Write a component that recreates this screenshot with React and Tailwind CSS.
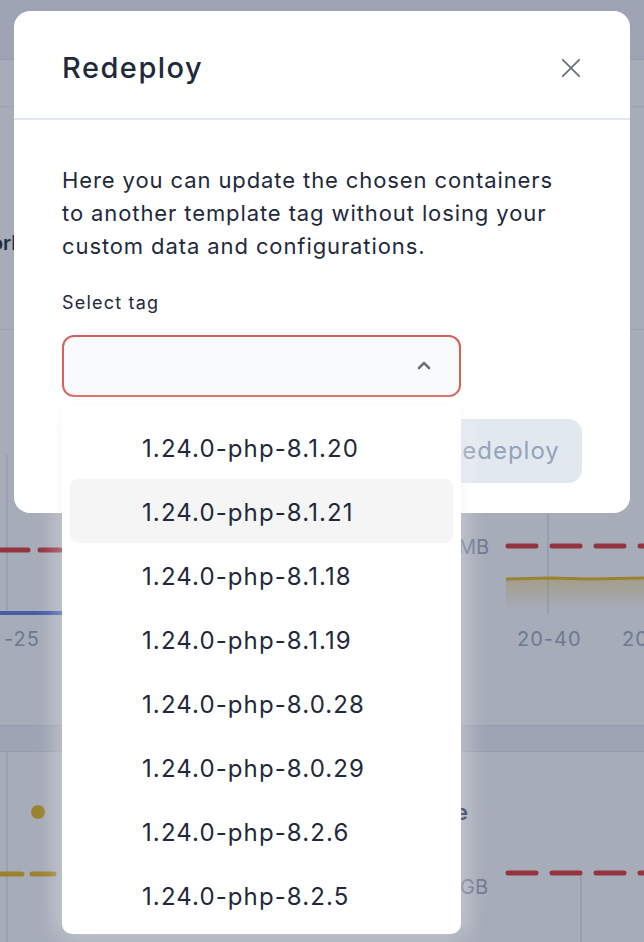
import React from 'react';

const tags = [
  '1.24.0-php-8.1.20',
  '1.24.0-php-8.1.21',
  '1.24.0-php-8.1.18',
  '1.24.0-php-8.1.19',
  '1.24.0-php-8.0.28',
  '1.24.0-php-8.0.29',
  '1.24.0-php-8.2.6',
  '1.24.0-php-8.2.5',
];

const font = { fontFamily: 'Inter, "Noto Sans", sans-serif' };

// dashboard that sits behind the overlay
function Dashboard() {
  return (
    <div className="w-full h-[942px] bg-white flex flex-col text-[#0f172a]">
      <div className="h-[60px] bg-[#eef1f5] border-b border-[#dfe3ea]" />
      <div className="h-[47px] border-b border-[#e5e7eb]" />
      <div className="h-[223px] border-b border-[#e5e7eb] flex items-center">
        <span className="-ml-[60px] mt-[50px] text-[20px] font-semibold">Network</span>
      </div>
      <div className="h-[395px] flex">
        <svg width="440" height="395" className="shrink-0">
          <line x1="7" y1="125" x2="7" y2="280" stroke="#e2e8f0" strokeWidth="2" />
          <line x1="0" y1="220" x2="60" y2="220" stroke="#dc2626" strokeWidth="5" strokeDasharray="28 12" strokeLinecap="round" />
          <line x1="0" y1="283" x2="70" y2="283" stroke="#4f6fe0" strokeWidth="4" />
          <text x="4" y="316" fontSize="20" fill="#94a3b8" style={font} letterSpacing="1">-25</text>
        </svg>
        <svg width="204" height="395" className="shrink-0">
          <defs>
            <linearGradient id="ylw" x1="0" y1="0" x2="0" y2="1">
              <stop offset="0" stopColor="#eab308" stopOpacity="0.35" />
              <stop offset="1" stopColor="#eab308" stopOpacity="0" />
            </linearGradient>
          </defs>
          <line x1="108" y1="180" x2="108" y2="285" stroke="#e2e8f0" strokeWidth="2" />
          <text x="18" y="224" fontSize="20" fill="#94a3b8" style={font}>MB</text>
          <line x1="68" y1="216" x2="204" y2="216" stroke="#dc2626" strokeWidth="5" strokeDasharray="28 16" strokeLinecap="round" />
          <path d="M66 249 L110 248 L150 249 L204 248 L204 280 L66 280 Z" fill="url(#ylw)" />
          <path d="M66 249 L110 248 L150 249 L204 248" stroke="#eab308" strokeWidth="3" fill="none" />
          <text x="77" y="316" fontSize="20" fill="#94a3b8" style={font} letterSpacing="1">20-40</text>
          <text x="182" y="316" fontSize="20" fill="#94a3b8" style={font} letterSpacing="1">20</text>
        </svg>
      </div>
      <div className="h-[27px] bg-[#eef1f5] border-y border-[#dfe3ea]" />
      <div className="flex-1 flex">
        <svg width="440" height="190" className="shrink-0">
          <circle cx="38" cy="60" r="7" fill="#eab308" />
          <line x1="7" y1="0" x2="7" y2="190" stroke="#e2e8f0" strokeWidth="2" />
          <line x1="0" y1="122" x2="60" y2="122" stroke="#eab308" strokeWidth="5" strokeDasharray="22 10" strokeLinecap="round" />
        </svg>
        <svg width="204" height="190" className="shrink-0 overflow-visible">
          <text x="28" y="68" textAnchor="end" fontSize="22" fontWeight="600" fill="#0f172a" style={font}>Disk usage</text>
          <line x1="141" y1="121" x2="141" y2="190" stroke="#e2e8f0" strokeWidth="2" />
          <line x1="68" y1="121" x2="204" y2="121" stroke="#dc2626" strokeWidth="5" strokeDasharray="28 16" strokeLinecap="round" />
          <text x="20" y="142" fontSize="20" fill="#94a3b8" style={font}>GB</text>
        </svg>
      </div>
    </div>
  );
}

export default function App() {
  return (
    <div className="relative w-[644px] h-[942px] overflow-hidden" style={font}>
      <Dashboard />
      <div className="absolute inset-0 bg-[#3c4764]/45" />

      {/* modal */}
      <div className="absolute left-[14px] top-[11px] w-[616px] h-[502px] bg-white rounded-[16px] flex flex-col">
        <div className="h-[109px] px-[48px] pt-[6px] flex items-center justify-between border-b-2 border-[#e2e8f0]">
          <h2 className="text-[29px] font-medium text-[#1e293b] tracking-[1.5px]">Redeploy</h2>
          <button className="text-[#6b7280] mr-[-3px]">
            <svg width="28" height="28" viewBox="0 0 24 24" fill="none" stroke="currentColor" strokeWidth="1.6" strokeLinecap="round">
              <path d="M5 5 L19 19 M19 5 L5 19" />
            </svg>
          </button>
        </div>

        <div className="px-[48px] pt-[44px] flex flex-col">
          <p className="text-[22px] leading-[33px] text-[#1e293b] tracking-[0.9px]">
            Here you can update the chosen containers to another template tag without losing your custom data and configurations.
          </p>
          <label className="mt-[28px] text-[18px] leading-[24px] text-[#1e293b] tracking-[1.2px]">Select tag</label>

          <div className="relative mt-[20px] w-[399px]">
            <div className="h-[62px] rounded-[12px] border-2 border-[#d6605a] bg-[#f8fafc] flex items-center justify-end pr-[26px]">
              <svg width="18" height="12" viewBox="0 0 18 12" fill="none" stroke="#6b7280" strokeWidth="2.6" strokeLinecap="round" strokeLinejoin="round">
                <path d="M4 8 L9 3 L14 8" />
              </svg>
            </div>

            <ul className="absolute left-0 top-[71px] w-[399px] bg-white rounded-[10px] px-[8px] pt-[9px] pb-[7px] z-10 shadow-[0_0_22px_4px_rgba(255,255,255,0.45),0_4px_12px_rgba(15,23,42,0.06)]">
              {tags.map((t, i) => (
                <li
                  key={t}
                  className={
                    'h-[64px] rounded-[8px] pl-[72px] pt-[4px] flex items-center text-[24px] text-[#1e293b] tracking-[1.1px] ' +
                    (i === 1 ? 'bg-[#f5f5f5]' : '')
                  }
                >
                  {t}
                </li>
              ))}
            </ul>
          </div>

          <div className="flex justify-end mt-[22px]">
            <button className="h-[64px] w-[158px] rounded-[14px] bg-[#e2e8f0] text-[24px] text-[#94a3b8] tracking-[1px]">
              Redeploy
            </button>
          </div>
        </div>
      </div>
    </div>
  );
}
